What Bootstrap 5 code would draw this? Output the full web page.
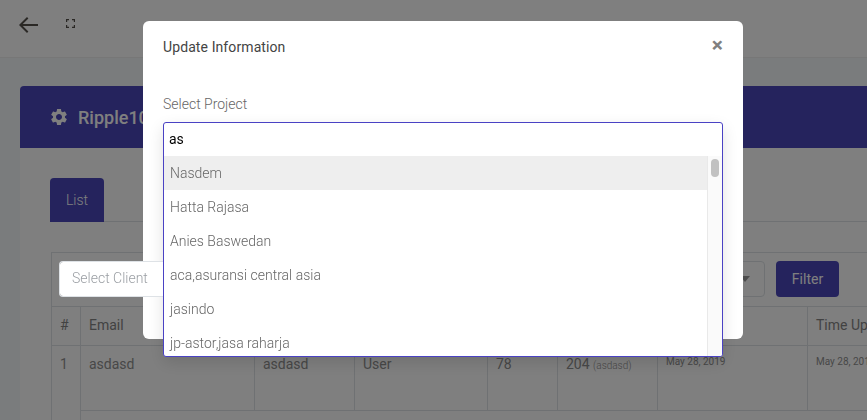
<!DOCTYPE html>
<html lang="en">
<head>
<meta charset="utf-8">
<title>Update Information</title>
<link rel="stylesheet" href="https://cdn.jsdelivr.net/npm/bootstrap@5.3.0/dist/css/bootstrap.min.css">
<style>
html,body{height:420px;overflow:hidden}
body{font-family:Roboto,"Liberation Sans",sans-serif;font-size:14px;background:#f5f8fa;color:#6c757d;width:867px}
.topbar{height:58px;background:#fff;border-bottom:1px solid #eee;padding:0 0 8px 16px}
.topbar .fs-ico{margin-left:26px;margin-top:-3px}
.page-wrap{padding:28px 0 0 20px;width:867px;height:362px;overflow:hidden}
.panel{border:0;border-radius:4px 4px 0 0;background:#fff;width:940px}
.panel-head{height:62px;background:#4a46ba;color:#fff;padding-left:29px;font-size:18px;font-weight:500;gap:9px;border-radius:4px 4px 0 0}
.panel-body{padding:30px 0 0 30px}
.tabs-line{border-bottom:1px solid #dee2e6;height:44px}
.tab-on{display:block;width:54px;height:44px;background:#4a46ba;color:#fff;border-radius:4px 4px 0 0;text-align:center;line-height:44px;font-weight:300}
.filter-box{margin:30px 0 0 1px;border:1px solid #dee2e6;border-bottom:0;height:54px;padding:8px 7px;gap:0}
.filter-box .form-control,.filter-box .form-select{height:36px;font-size:14px;font-weight:300;border-color:#dee2e6;border-radius:4px;padding-left:12px}
.filter-box .form-control{width:104px;flex:none;position:relative;z-index:15;border-right:0;border-radius:4px 0 0 4px;padding:4px 0 6px 12px}
.filter-box .form-control::placeholder{color:#9a9ea3}
.filter-box .form-select{width:602px;flex:none;background-image:url("data:image/svg+xml,%3csvg xmlns='http://www.w3.org/2000/svg' viewBox='0 0 10 6'%3e%3cpath fill='%23999' d='M0 0h10L5 6z'/%3e%3c/svg%3e");background-size:10px 6px;background-position:right 14px center}
.btn-filter{width:63px;height:36px;margin-left:11px;flex:none;background:#4a46ba;color:#fff;border:0;font-size:14px;padding:0;font-weight:400;border-radius:4px}
.data-grid{margin:0 0 0 1px;width:900px;table-layout:fixed;font-size:14px}
.data-grid th,.data-grid td{border:1px solid #dee2e6;padding:0 8px;background:#fff;color:#909090}
.data-grid th{height:39px;vertical-align:middle;font-weight:400;color:#858585;padding-bottom:2px}
.data-grid td{height:65px;vertical-align:top;padding-top:8px;font-weight:400}
.data-grid .spare td{height:40px}
.tiny{font-size:10px;font-weight:300}
.date-tiny{font-size:10px;display:block}
.dim{position:fixed;inset:0;background:#000;opacity:.5;z-index:10}
.dialog-holder{position:fixed;left:143px;top:21px;width:600px;z-index:12}
.dialog-box{height:318px;border:0;border-radius:6px;background:#fff;padding:0 20px;position:relative}
.dialog-head{height:52px;flex:none}
.dialog-head h5{font-size:14px;font-weight:400;margin:0;color:#444;letter-spacing:.1px}
.dialog-x{font-size:21px;line-height:1;font-weight:700;color:#808080;border:0;background:none;padding:0;margin-top:-3px}
.field-label{margin:23px 0 9px;font-size:14px;font-weight:300;color:#666;line-height:17px;display:block}
.combo{position:relative;flex:none;z-index:16;width:560px;height:235px;border:1px solid #4a42c4;border-radius:3px;background:#fff;box-shadow:0 6px 16px rgba(0,0,0,.12);overflow:hidden}
.combo-input{display:block;height:33px;line-height:33px;padding-left:5px;font-size:14px;color:#000}
.combo-list{display:block;width:543px;border-radius:0}
.combo-list .list-group-item{height:34px;border:0;border-radius:0;padding:0 6px;line-height:34px;font-size:14px;font-weight:300;color:#666;background:transparent;white-space:nowrap}
.combo-list .list-group-item.hot{background:#eee}
.combo-track{position:absolute;right:0;top:33px;bottom:0;width:15px;background:#fafafa;border-left:1px solid #e9e9e9}
.combo-thumb{position:absolute;left:3px;top:3px;width:8px;height:18px;border-radius:4px;background:#c1c1c1}
</style>
</head>
<body>
<header class="topbar d-flex align-items-center">
  <svg width="24" height="24" viewBox="0 0 24 24" aria-hidden="true"><path fill="#54504a" d="M22 11H6.8l5.6-5.6L11 4l-8 8 8 8 1.4-1.4L6.8 13H22z"/></svg>
  <svg class="fs-ico" width="9" height="9" viewBox="0 0 9 9" aria-hidden="true"><path fill="none" stroke="#54504a" stroke-width="1.2" d="M.6 3V.6H3M6 .6h2.4V3M8.4 6v2.4H6M3 8.4H.6V6"/></svg>
</header>
<main class="page-wrap">
  <section class="card panel">
    <div class="panel-head d-flex align-items-center">
      <svg width="20" height="20" viewBox="0 0 24 24" aria-hidden="true"><path fill="#fff" d="M19.14 12.94c.04-.3.06-.61.06-.94 0-.32-.02-.64-.07-.94l2.03-1.58c.18-.14.23-.41.12-.61l-1.92-3.32c-.12-.22-.37-.29-.59-.22l-2.39.96c-.5-.38-1.03-.7-1.62-.94l-.36-2.54c-.04-.24-.24-.41-.48-.41h-3.84c-.24 0-.43.17-.47.41l-.36 2.54c-.59.24-1.13.57-1.62.94l-2.39-.96c-.22-.08-.47 0-.59.22L2.74 8.87c-.12.21-.08.47.12.61l2.03 1.58c-.05.3-.09.63-.09.94s.02.64.07.94l-2.03 1.58c-.18.14-.23.41-.12.61l1.92 3.32c.12.22.37.29.59.22l2.39-.96c.5.38 1.03.7 1.62.94l.36 2.54c.05.24.24.41.48.41h3.84c.24 0 .44-.17.47-.41l.36-2.54c.59-.24 1.13-.56 1.62-.94l2.39.96c.22.08.47 0 .59-.22l1.92-3.32c.12-.22.07-.47-.12-.61l-2.01-1.58zM12 15.6c-1.98 0-3.6-1.62-3.6-3.6s1.62-3.6 3.6-3.6 3.6 1.62 3.6 3.6-1.62 3.6-3.6 3.6z"/></svg>
      <span>Ripple10</span>
    </div>
    <div class="panel-body">
      <div class="tabs-line"><a class="tab-on text-decoration-none" href="#">List</a></div>
      <div class="filter-box d-flex">
        <input class="form-control" placeholder="Select Client">
        <select class="form-select"><option></option></select>
        <button class="btn btn-filter" type="button">Filter</button>
      </div>
      <table class="data-grid">
        <colgroup><col style="width:29px"><col style="width:174px"><col style="width:100px"><col style="width:133px"><col style="width:70px"><col style="width:100px"><col style="width:150px"><col style="width:144px"></colgroup>
        <thead><tr><th>#</th><th>Email</th><th>Name</th><th>Role</th><th>Age</th><th>Total</th><th>Time In</th><th>Time Up</th></tr></thead>
        <tbody>
          <tr><td rowspan="2">1</td><td>asdasd</td><td>asdasd</td><td>User</td><td>78</td><td>204 <span class="tiny">(asdasd)</span></td><td><span class="date-tiny">May 28, 2019</span></td><td><span class="date-tiny">May 28, 2019</span></td></tr>
          <tr class="spare"><td colspan="7"></td></tr>
        </tbody>
      </table>
    </div>
  </section>
</main>
<div class="dim"></div>
<div class="dialog-holder">
  <div class="card dialog-box">
    <div class="dialog-head d-flex justify-content-between align-items-center">
      <h5>Update Information</h5>
      <button class="dialog-x" type="button" aria-label="Close">×</button>
    </div>
    <label class="field-label">Select Project</label>
    <div class="combo">
      <span class="combo-input">as</span>
      <div class="list-group combo-list">
        <div class="list-group-item hot">Nasdem</div>
        <div class="list-group-item">Hatta Rajasa</div>
        <div class="list-group-item">Anies Baswedan</div>
        <div class="list-group-item">aca,asuransi central asia</div>
        <div class="list-group-item">jasindo</div>
        <div class="list-group-item">jp-astor,jasa raharja</div>
      </div>
      <div class="combo-track"><div class="combo-thumb"></div></div>
    </div>
  </div>
</div>
<script src="https://cdn.jsdelivr.net/npm/bootstrap@5.3.0/dist/js/bootstrap.bundle.min.js"></script>
</body>
</html>
